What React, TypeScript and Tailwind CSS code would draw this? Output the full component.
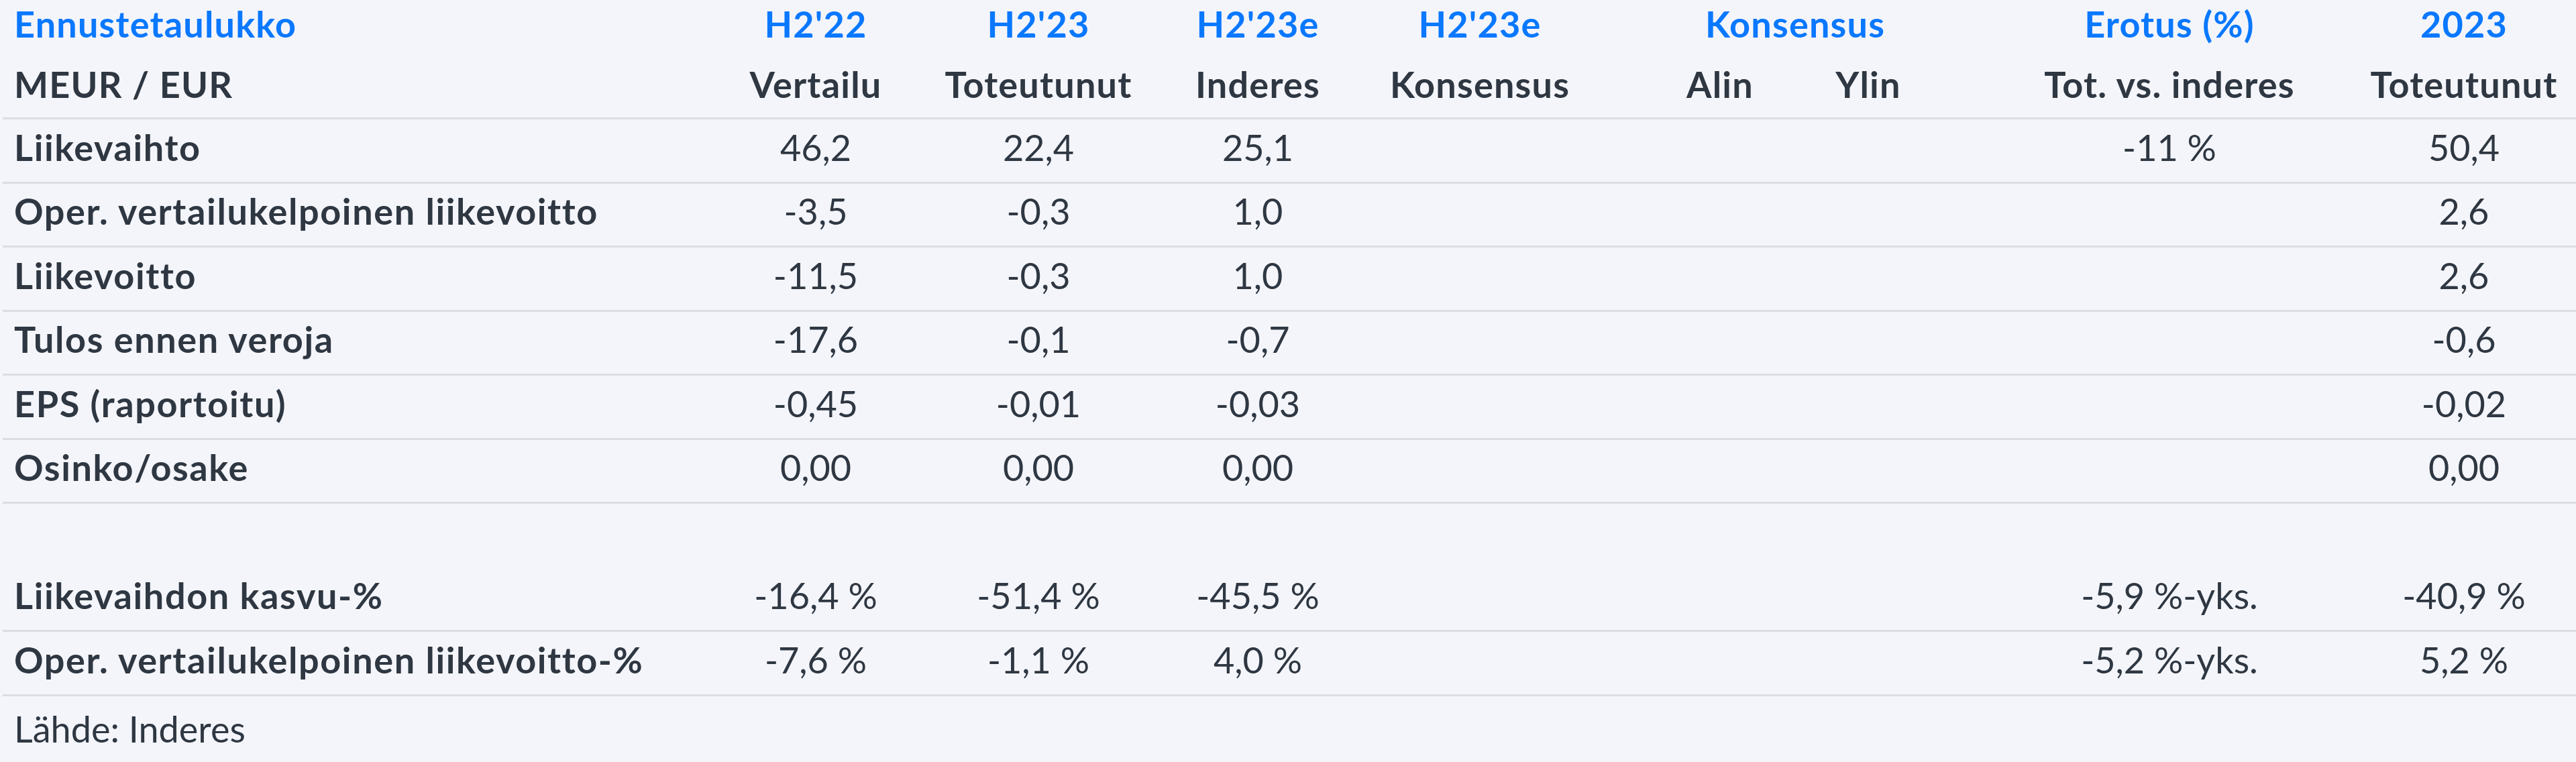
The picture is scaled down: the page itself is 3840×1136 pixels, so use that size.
import React from "react";

const COLS =
  "grid grid-cols-[1046px_332px_332px_322px_340px_312px_321px_497px_334px]";

type Row = { label: string; v: string[]; erotus?: string; last: string } | null;

const rows: Row[] = [
  { label: "Liikevaihto", v: ["46,2", "22,4", "25,1"], erotus: "-11 %", last: "50,4" },
  { label: "Oper. vertailukelpoinen liikevoitto", v: ["-3,5", "-0,3", "1,0"], last: "2,6" },
  { label: "Liikevoitto", v: ["-11,5", "-0,3", "1,0"], last: "2,6" },
  { label: "Tulos ennen veroja", v: ["-17,6", "-0,1", "-0,7"], last: "-0,6" },
  { label: "EPS (raportoitu)", v: ["-0,45", "-0,01", "-0,03"], last: "-0,02" },
  { label: "Osinko/osake", v: ["0,00", "0,00", "0,00"], last: "0,00" },
  null,
  {
    label: "Liikevaihdon kasvu-%",
    v: ["-16,4 %", "-51,4 %", "-45,5 %"],
    erotus: "-5,9 %-yks.",
    last: "-40,9 %",
  },
  {
    label: "Oper. vertailukelpoinen liikevoitto-%",
    v: ["-7,6 %", "-1,1 %", "4,0 %"],
    erotus: "-5,2 %-yks.",
    last: "5,2 %",
  },
];

export default function App() {
  return (
    <div
      className="w-[3840px] h-[1136px] bg-[#f4f5fa] text-[#2e3742] text-[54px] leading-none overflow-hidden"
      style={{ fontFamily: "Lato, 'Liberation Sans', sans-serif" }}
    >
      <div className="ml-[4px]">
        <div className="border-b-[3px] border-[#dcdde3]">
          <div className={`${COLS} h-[88px] items-center pb-[16px] font-bold tracking-[1.2px] text-[#0a78ff] whitespace-nowrap`}>
            <div className="pl-[17px]">Ennustetaulukko</div>
            <div className="text-center">H2'22</div>
            <div className="text-center">H2'23</div>
            <div className="text-center">H2'23e</div>
            <div className="text-center">H2'23e</div>
            <div className="col-span-2 text-center pr-[33px]">Konsensus</div>
            <div className="text-center pr-[47px]">Erotus (%)</div>
            <div className="text-center">2023</div>
          </div>
          <div className={`${COLS} h-[87px] items-center pb-[12px] font-bold tracking-[1.2px] whitespace-nowrap`}>
            <div className="pl-[17px]">MEUR / EUR</div>
            <div className="text-center">Vertailu</div>
            <div className="text-center">Toteutunut</div>
            <div className="text-center">Inderes</div>
            <div className="text-center">Konsensus</div>
            <div className="text-center pl-[64px]">Alin</div>
            <div className="text-center pr-[127px]">Ylin</div>
            <div className="text-center pr-[47px]">Tot. vs. inderes</div>
            <div className="text-center">Toteutunut</div>
          </div>
        </div>
        {rows.map((r, i) =>
          r === null ? (
            <div key={i} className="h-[95.5px] border-b-[3px] border-transparent" />
          ) : (
            <div
              key={i}
              className={`${COLS} h-[95.5px] items-center pb-[9px] border-b-[3px] border-[#dcdde3] whitespace-nowrap`}
            >
              <div className="pl-[17px] font-bold tracking-[1.6px]">{r.label}</div>
              <div className="text-center">{r.v[0]}</div>
              <div className="text-center">{r.v[1]}</div>
              <div className="text-center">{r.v[2]}</div>
              <div />
              <div />
              <div />
              <div className="text-center pr-[47px]">{r.erotus ?? ""}</div>
              <div className="text-center">{r.last}</div>
            </div>
          )
        )}
        <div className="h-[98px] flex items-center pl-[17px]">Lähde: Inderes</div>
      </div>
    </div>
  );
}
